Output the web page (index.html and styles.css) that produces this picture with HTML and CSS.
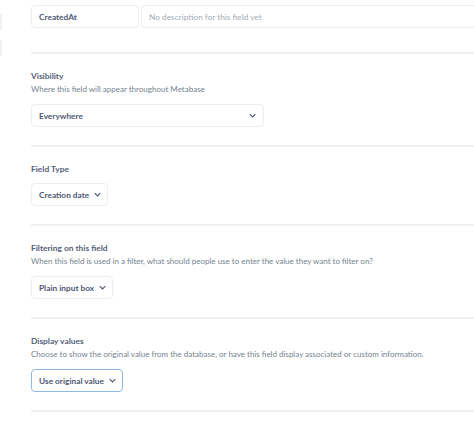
FILE: index.html
```html
<!DOCTYPE html>
<html>
<head>
<meta charset="utf-8">
<link rel="stylesheet" href="styles.css">
</head>
<body>
<div class="edge"><span></span><span></span></div>
<main class="page">
  <div class="name-row">
    <div class="input name">CreatedAt</div>
    <div class="input desc">No description for this field yet</div>
  </div>
  <section class="section first">
    <h3>Visibility</h3>
    <p>Where this field will appear throughout Metabase</p>
    <div class="select wide"><span>Everywhere</span><svg class="chev" viewBox="0 0 10 6"><path d="M1 1l4 4 4-4"/></svg></div>
  </section>
  <section class="section">
    <h3>Field Type</h3>
    <div class="select"><span>Creation date</span><svg class="chev" viewBox="0 0 10 6"><path d="M1 1l4 4 4-4"/></svg></div>
  </section>
  <section class="section">
    <h3>Filtering on this field</h3>
    <p>When this field is used in a filter, what should people use to enter the value they want to filter on?</p>
    <div class="select"><span>Plain input box</span><svg class="chev" viewBox="0 0 10 6"><path d="M1 1l4 4 4-4"/></svg></div>
  </section>
  <section class="section">
    <h3>Display values</h3>
    <p>Choose to show the original value from the database, or have this field display associated or custom information.</p>
    <div class="select active"><span>Use original value</span><svg class="chev" viewBox="0 0 10 6"><path d="M1 1l4 4 4-4"/></svg></div>
  </section>
</main>
</body>
</html>
```
FILE: styles.css
```css
html, body {
  margin: 0;
  padding: 0;
  background: #fff;
}
body {
  font-family: Lato, "Open Sans", sans-serif;
  color: #4c5773;
  position: relative;
  width: 474px;
  height: 424px;
  overflow: hidden;
}
.edge {
  position: absolute;
  left: 0;
  top: 14px;
  display: flex;
  flex-direction: column;
  gap: 10px;
}
.edge span {
  display: block;
  width: 2px;
  height: 16px;
  background: #f0f1f3;
}
.page {
  padding: 5px 0 0 31px;
}
.name-row {
  display: flex;
  gap: 2px;
  padding-bottom: 24px;
  border-bottom: 2px solid #f0f0f2;
}
.input {
  height: 21px;
  border: 1px solid #eceef1;
  border-radius: 4px;
  display: flex;
  align-items: center;
  padding: 0 7px;
  font-size: 8.3px;
  box-sizing: content-box;
}
.input.name {
  width: 92px;
  font-weight: 700;
  color: #4c5773;
}
.input.desc {
  flex: 1;
  color: #a3abb6;
  margin-right: -10px;
}
.section {
  border-bottom: 2px solid #f0f0f2;
  padding: 16px 0 18px;
}
h3 {
  margin: 0;
  font-size: 8.4px;
  font-weight: 700;
  line-height: 12px;
  color: #535e78;
}
p {
  margin: 1px 0 0;
  font-size: 8px;
  line-height: 13px;
  color: #74838f;
}
.select {
  margin-top: 8px;
  display: inline-flex;
  align-items: center;
  height: 21px;
  border: 1px solid #eceef1;
  border-radius: 4px;
  padding: 0 6px 0 7px;
  font-size: 8.3px;
  font-weight: 700;
  color: #4c5773;
  gap: 5px;
}
.select.wide {
  width: 217px;
  padding-right: 7px;
  justify-content: space-between;
}
.select.active {
  border-color: #8fb9e4;
}
.chev {
  width: 7px;
  height: 5px;
  fill: none;
  stroke: #4c5773;
  stroke-width: 1.6;
}
```
